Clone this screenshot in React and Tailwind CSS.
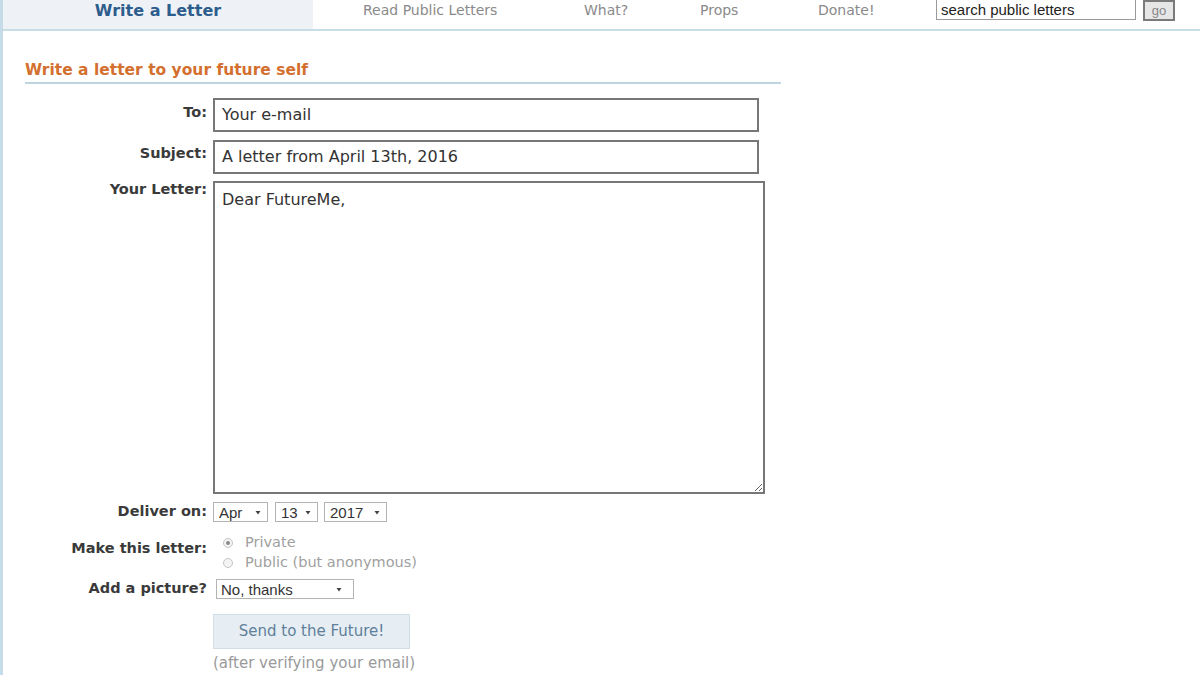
import React from "react";

const dv = { fontFamily: '"DejaVu Sans", Verdana, sans-serif' };
const ls = { fontFamily: '"Liberation Sans", Arial, sans-serif' };

function Arrow() {
  return (
    <svg width="6" height="5" viewBox="0 0 6 5" className="shrink-0">
      <path d="M0.5 1 L5.5 1 L3 4.5 Z" fill="#444" />
    </svg>
  );
}

function Sel({ w, text, pl = "pl-[5px]", gap = "ml-auto mr-[6px]" }) {
  return (
    <div
      className={`flex items-center h-[20px] border border-[#b4b4b4] bg-white text-[15px] text-[#333] leading-none ${pl}`}
      style={{ ...ls, width: w }}
    >
      <span>{text}</span>
      <span className={gap}>
        <Arrow />
      </span>
    </div>
  );
}

function Radio({ checked, label }) {
  return (
    <div className="flex items-center h-[20px]">
      <span className="ml-[10px] w-[10px] h-[10px] rounded-full border border-[#c4c4c4] bg-[#f4f4f4] flex items-center justify-center">
        {checked && <span className="w-[4px] h-[4px] rounded-full bg-[#8a8a8a]" />}
      </span>
      <span className="ml-[12px] text-[14.5px] text-[#a0a0a0]" style={dv}>
        {label}
      </span>
    </div>
  );
}

export default function App() {
  const label = "w-[182px] mr-[6px] text-right text-[14.5px] font-bold text-[#3a3a3a] shrink-0";
  return (
    <div
      className="w-[1200px] h-[675px] overflow-hidden bg-white border-l-[3px] border-[#c5dbe8]"
      style={dv}
    >
      {/* nav */}
      <div className="flex h-[31px] border-b-2 border-[#c8dde6]">
        <div className="w-[310px] h-[29px] bg-[#eef2f6] flex justify-center pt-[1px]">
          <span className="text-[16px] leading-[20px] font-bold text-[#2d5d8c]">Write a Letter</span>
        </div>
        <div className="w-[271px] pl-[50px] text-[14px] leading-[20px] text-[#8a8a8a]">Read Public Letters</div>
        <div className="w-[116px] text-[14px] leading-[20px] text-[#8a8a8a]">What?</div>
        <div className="w-[118px] text-[14px] leading-[20px] text-[#8a8a8a]">Props</div>
        <div className="w-[118px] text-[14px] leading-[20px] text-[#8a8a8a]">Donate!</div>
        <div
          className="w-[200px] h-[21px] -mt-[1px] border border-[#9a9a9a] bg-white pl-[4px] text-[15px] leading-[19px] text-[#222]"
          style={ls}
        >
          search public letters
        </div>
        <div
          className="ml-[7px] w-[32px] h-[21px] border-2 border-[#7a7a7a] bg-[#e6e6e6] flex items-center justify-center text-[13px] text-[#888]"
          style={ls}
        >
          go
        </div>
      </div>

      {/* content */}
      <div className="pl-[22px]">
        <div className="mt-[31px] w-[756px] border-b-2 border-[#bcd5df] pb-[3px]">
          <div className="text-[15.5px] leading-[17px] font-bold text-[#d4702f]">Write a letter to your future self</div>
        </div>

        <div className="mt-[14px] flex flex-col">
          <div className="flex items-center">
            <div className={`${label} -mt-[4px]`}>To:</div>
            <div className="w-[546px] h-[34px] border-2 border-[#777] bg-white pl-[7px] flex items-center text-[16px] text-[#333]">
              Your e-mail
            </div>
          </div>
          <div className="flex items-center mt-[8px]">
            <div className={`${label} -mt-[6px]`}>Subject:</div>
            <div className="w-[546px] h-[34px] border-2 border-[#777] bg-white pl-[7px] flex items-center text-[16px] text-[#333]">
              A letter from April 13th, 2016
            </div>
          </div>
          <div className="flex items-start mt-[7px]">
            <div className={`${label} pt-[0px] leading-[17px]`}>Your Letter:</div>
            <textarea
              defaultValue="Dear FutureMe,"
              className="w-[552px] h-[313px] border-2 border-[#777] bg-white pl-[7px] pt-[5px] text-[16px] text-[#333] outline-none resize"
              style={dv}
            />
          </div>
          <div className="flex items-center mt-[8px] h-[20px]">
            <div className={label}>Deliver on:</div>
            <Sel w="55px" text="Apr" />
            <div className="ml-[7px]">
              <Sel w="43px" text="13" />
            </div>
            <div className="ml-[6px]">
              <Sel w="63px" text="2017" />
            </div>
          </div>
          <div className="flex items-start mt-[11px]">
            <div className={`${label} pt-[7px] leading-[17px]`}>Make this letter:</div>
            <div className="flex flex-col">
              <Radio checked label="Private" />
              <Radio label="Public (but anonymous)" />
            </div>
          </div>
          <div className="flex items-center mt-[6px] h-[20px]">
            <div className={label}>Add a picture?</div>
            <div className="ml-[3px]">
              <Sel w="138px" text="No, thanks" pl="pl-[4px]" gap="ml-auto mr-[11px]" />
            </div>
          </div>
          <div className="flex mt-[15px]">
            <div className="w-[182px] mr-[6px] shrink-0" />
            <div className="w-[197px] h-[35px] bg-[#e6eef3] border border-[#d2dfe7] flex items-center justify-center text-[15px] text-[#5f7f9a]">
              Send to the Future!
            </div>
          </div>
          <div className="flex mt-[6px]">
            <div className="w-[182px] mr-[6px] shrink-0" />
            <div className="text-[15px] leading-[17px] text-[#9a9a9a]">(after verifying your email)</div>
          </div>
        </div>
      </div>
    </div>
  );
}
